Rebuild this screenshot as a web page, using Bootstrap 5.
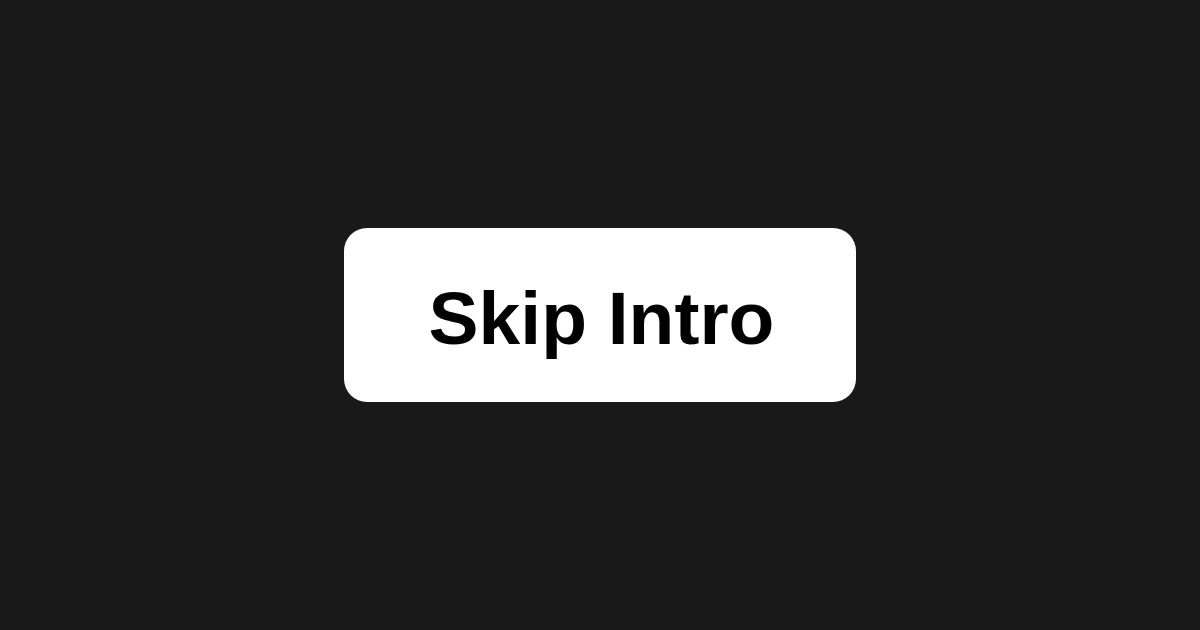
<!DOCTYPE html>
<html lang="en">
<head>
<meta charset="utf-8">
<meta name="viewport" content="width=device-width, initial-scale=1">
<title>Skip Intro</title>
<link href="https://cdn.jsdelivr.net/npm/bootstrap@5.3.0/dist/css/bootstrap.min.css" rel="stylesheet">
<style>
body { background: #191919; }
.btn-skip {
  --bs-btn-color: #000;
  --bs-btn-bg: #fff;
  --bs-btn-hover-color: #000;
  --bs-btn-hover-bg: #e6e6e6;
  --bs-btn-active-color: #000;
  --bs-btn-active-bg: #d9d9d9;
  --bs-btn-border-width: 0;
  --bs-btn-border-radius: 23px;
  --bs-btn-font-family: "Liberation Sans", Arial, sans-serif;
  --bs-btn-font-size: 75px;
  --bs-btn-font-weight: 700;
  --bs-btn-line-height: 88px;
  padding: 46px 82px 40px 85px;
}
</style>
</head>
<body class="min-vh-100 d-flex align-items-center justify-content-center">
<button type="button" class="btn btn-skip text-nowrap">Skip Intro</button>
<script src="https://cdn.jsdelivr.net/npm/bootstrap@5.3.0/dist/js/bootstrap.bundle.min.js"></script>
</body>
</html>
